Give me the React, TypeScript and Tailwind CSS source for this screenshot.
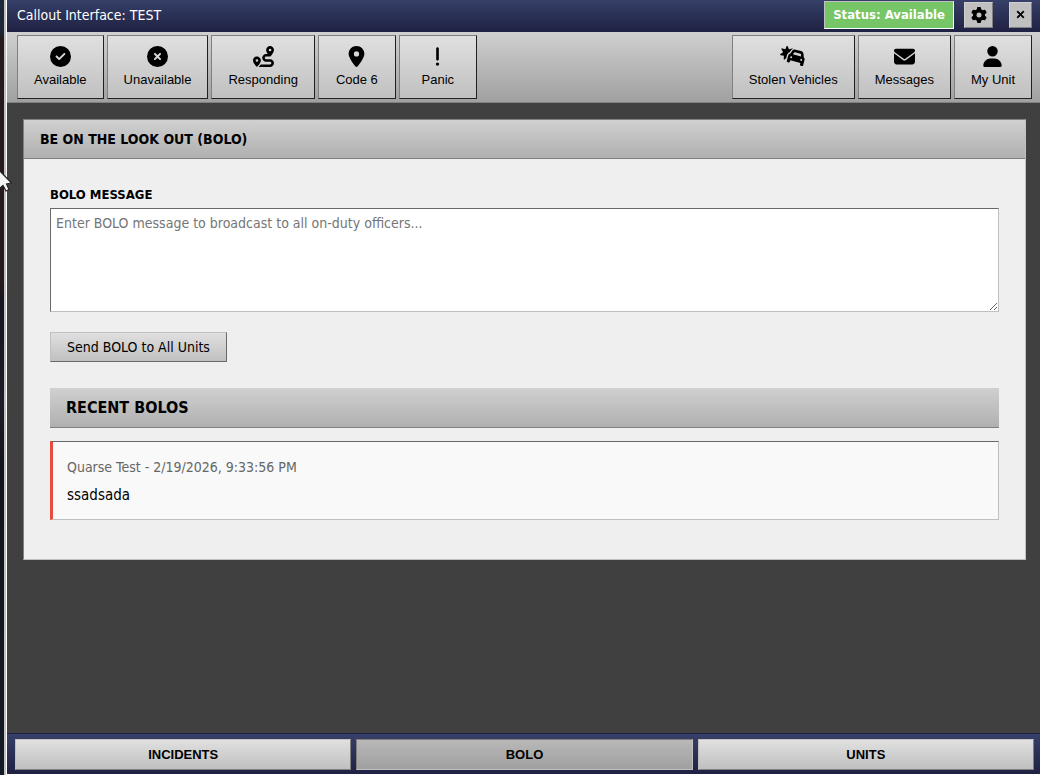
import type { ReactNode } from 'react'
import {
  FaCarBurst,
  FaCircleCheck,
  FaCircleXmark,
  FaEnvelope,
  FaExclamation,
  FaGear,
  FaLocationDot,
  FaRoute,
  FaUser,
  FaXmark,
} from 'react-icons/fa6'

function ToolButton({ icon, label }: { icon: ReactNode; label: string }) {
  return (
    <button
      type="button"
      className="flex h-16 min-w-[78px] flex-col items-center border border-t-[#808080] border-r-[#202020] border-b-[#202020] border-l-[#808080] bg-linear-to-b from-[#e0e0e0] to-[#c0c0c0] px-4 pt-2 font-['Liberation_Sans',sans-serif] text-[13px] leading-4 text-black"
    >
      <span className="flex h-6 items-center text-[21px]">{icon}</span>
      <span className="mt-1 whitespace-nowrap">{label}</span>
    </button>
  )
}

function NavTab({ label, active = false }: { label: string; active?: boolean }) {
  return (
    <button
      type="button"
      className={
        active
          ? 'h-[31px] flex-1 border border-t-[#808080] border-r-[#c0c0c0] border-b-[#c0c0c0] border-l-[#808080] bg-linear-to-b from-[#b8b8b8] to-[#a0a0a0]'
          : 'h-[31px] flex-1 border border-t-[#c0c0c0] border-r-[#808080] border-b-[#808080] border-l-[#c0c0c0] bg-linear-to-b from-[#e0e0e0] to-[#c0c0c0]'
      }
    >
      {label}
    </button>
  )
}

export default function App() {
  return (
    <div className="relative flex h-screen bg-[linear-gradient(#1c2738_0%,#1c2738_4%,#271a1d_5%,#271a1d_36%,#15161e_39%,#1e1c28_52%,#12141b_60%,#141a26_100%)] font-['DejaVu_Sans_Condensed','Noto_Sans',sans-serif] text-black">
      <div className="ml-1 flex min-w-0 flex-1 flex-col border-l-2 border-[#c0c0c0]">
        <div className="flex min-h-0 flex-1 flex-col border-b border-l border-white bg-[#404040]">
          <header className="flex h-8 shrink-0 items-start bg-linear-to-b from-[#374069] to-[#1f2142] pr-2 pl-[10px]">
            <h1 className="flex-1 text-sm leading-[30px] text-white">Callout Interface: TEST</h1>
            <div className="mt-px flex items-center">
              <span className="border border-t-[#c0c0c0] border-r-white border-b-white border-l-[#c0c0c0] bg-[#76c566] px-2 text-[13px] leading-[26px] font-bold text-white">
                Status: Available
              </span>
              <button
                type="button"
                aria-label="Settings"
                className="ml-[10px] flex h-[26px] w-[29px] items-center justify-center border border-t-[#d0d0d0] border-r-[#808080] border-b-[#808080] border-l-[#d0d0d0] bg-[#c0c0c0] pb-px"
              >
                <FaGear size={16} />
              </button>
              <button
                type="button"
                aria-label="Close"
                className="ml-4 flex h-[26px] w-[23px] items-center justify-center border border-t-[#d0d0d0] border-r-[#808080] border-b-[#808080] border-l-[#d0d0d0] bg-[#c0c0c0] pb-px"
              >
                <FaXmark size={11} strokeWidth={30} stroke="black" />
              </button>
            </div>
          </header>

          <div className="flex shrink-0 justify-between border-b border-[#808080] bg-linear-to-b from-[#d0d0d0] to-[#a0a0a0] pt-[3px] pr-2 pb-[3px] pl-[10px]">
            <div className="flex gap-[3px]">
              <ToolButton icon={<FaCircleCheck />} label="Available" />
              <ToolButton icon={<FaCircleXmark />} label="Unavailable" />
              <ToolButton icon={<FaRoute />} label="Responding" />
              <ToolButton icon={<FaLocationDot />} label="Code 6" />
              <ToolButton icon={<FaExclamation />} label="Panic" />
            </div>
            <div className="flex gap-[3px]">
              <ToolButton icon={<FaCarBurst size={26} />} label="Stolen Vehicles" />
              <ToolButton icon={<FaEnvelope />} label="Messages" />
              <ToolButton icon={<FaUser />} label="My Unit" />
            </div>
          </div>

          <main className="min-h-0 flex-1 overflow-auto pt-4 pr-[14px] pl-4">
            <section className="border border-t-[#808080] border-r-[#c0c0c0] border-b-[#c0c0c0] border-l-[#808080] bg-[#efefef]">
              <h2 className="border-b border-[#808080] bg-linear-to-b from-[#d0d0d0] to-[#b0b0b0] px-4 text-sm leading-[38px] font-bold">
                BE ON THE LOOK OUT (BOLO)
              </h2>
              <div className="px-[26px] pt-[26px] pb-[39px]">
                <label htmlFor="bolo-message" className="mb-[3px] block text-[13px] leading-5 font-bold">
                  BOLO MESSAGE
                </label>
                <textarea
                  id="bolo-message"
                  placeholder="Enter BOLO message to broadcast to all on-duty officers..."
                  className="block h-[104px] w-full resize-y border border-t-[#696969] border-r-[#c0c0c0] border-b-[#c0c0c0] border-l-[#696969] bg-white px-[5px] py-1 text-sm outline-none placeholder:text-[#757575]"
                />
                <button
                  type="button"
                  className="mt-5 block h-[30px] border border-t-[#c0c0c0] border-r-[#696969] border-b-[#696969] border-l-[#c0c0c0] bg-linear-to-b from-[#e0e0e0] to-[#c0c0c0] px-4 text-sm"
                >
                  Send BOLO to All Units
                </button>
                <h3 className="mt-[26px] border-b border-[#808080] bg-linear-to-b from-[#d0d0d0] to-[#b0b0b0] px-4 text-base leading-[39px] font-bold">
                  RECENT BOLOS
                </h3>
                <article className="mt-[13px] border border-l-3 border-t-[#696969] border-r-[#c0c0c0] border-b-[#c0c0c0] border-l-[#e74c3c] bg-[#f9f9f9] px-[14px] pt-[15px] pb-[14px]">
                  <p className="text-sm text-[#666666]">Quarse Test - 2/19/2026, 9:33:56 PM</p>
                  <p className="mt-2 text-[15px] leading-5">ssadsada</p>
                </article>
              </div>
            </section>
          </main>

          <nav className="flex shrink-0 gap-[5px] border-t border-[#1f2142] bg-linear-to-b from-[#374069] to-[#1f2142] pt-[5px] pr-[6px] pb-1 pl-2 font-['Liberation_Sans',sans-serif] text-[13px] font-bold">
            <NavTab label="INCIDENTS" />
            <NavTab label="BOLO" active />
            <NavTab label="UNITS" />
          </nav>
        </div>
      </div>

      <svg className="pointer-events-none absolute top-[168px] left-0" width="13" height="25" viewBox="0 0 13 25" aria-hidden="true">
        <path d="M-5-2 L11.500 15 L6.500 16 L9 21.500 L6 23 L3 17.500 L-5 24Z" fill="#f4f4f4" stroke="#222" strokeWidth="1.200" />
      </svg>
    </div>
  )
}
